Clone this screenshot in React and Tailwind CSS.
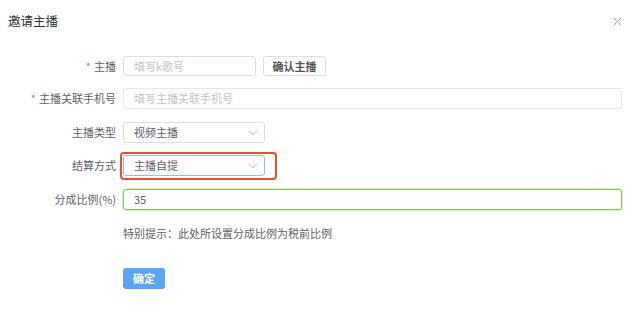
import React from "react";

const font = { fontFamily: '"Noto Sans CJK SC", "Noto Sans", sans-serif' };

const Label = ({ children, required }) => (
  <div className="w-[123px] shrink-0 pr-[7px] text-right text-[11px] text-[#606266]">
    {required && <span className="mr-[3px] text-[#f56c6c]">*</span>}
    {children}
  </div>
);

const Chevron = () => (
  <svg width="10" height="6" viewBox="0 0 10 6" className="text-[#c0c4cc]">
    <path d="M1 1l4 4 4-4" fill="none" stroke="currentColor" strokeWidth="1" />
  </svg>
);

const Select = ({ value, focused }) => (
  <div
    className={
      "flex h-[21px] w-[142px] items-center justify-between rounded-[3px] border bg-white pl-[10px] pr-[6px] text-[11px] text-[#606266] " +
      (focused ? "border-[#93bdf5]" : "border-[#dcdfe6]")
    }
  >
    <span>{value}</span>
    <Chevron />
  </div>
);

export default function App() {
  return (
    <div className="h-[321px] w-[634px] bg-white" style={font}>
      <div className="flex items-center justify-between pl-[8px] pr-[12px] pt-[12px]">
        <div className="text-[12.5px] leading-[18px] text-[#303133]">邀请主播</div>
        <svg width="9" height="9" viewBox="0 0 9 9" className="text-[#a0a4ab]">
          <path d="M1 1l7 7M8 1l-7 7" stroke="currentColor" strokeWidth="1" />
        </svg>
      </div>

      <div className="mt-[26px] flex flex-col">
        <div className="flex items-center">
          <Label required>主播</Label>
          <div className="flex h-[20px] w-[133px] items-center rounded-[3px] border border-[#dcdfe6] px-[10px] text-[11px] text-[#c0c4cc]">
            填写k歌号
          </div>
          <div className="ml-[7px] flex h-[20px] w-[63px] items-center justify-center rounded-[3px] border border-[#dcdfe6] text-[11px] font-semibold text-[#555]">
            确认主播
          </div>
        </div>

        <div className="mt-[12px] flex items-center">
          <Label required>主播关联手机号</Label>
          <div className="flex h-[21px] w-[499px] items-center rounded-[3px] border border-[#e4e7ed] px-[10px] text-[11px] text-[#c0c4cc]">
            填写主播关联手机号
          </div>
        </div>

        <div className="mt-[13px] flex items-center">
          <Label>主播类型</Label>
          <Select value="视频主播" />
        </div>

        <div className="mt-[12px] flex items-center">
          <Label>结算方式</Label>
          <div className="relative">
            <Select value="主播自提" focused />
            <div className="pointer-events-none absolute left-[-3px] top-[-3px] h-[28px] w-[157px] rounded-[4px] border-2 border-[#e8502c]" />
          </div>
        </div>

        <div className="mt-[13px] flex items-center">
          <Label>分成比例(%)</Label>
          <div className="flex h-[21px] w-[499px] items-center rounded-[3px] border border-[#8bc652] px-[10px] text-[11px] text-[#606266] shadow-[0_0_0_0.5px_#b5dc96]">
            35
          </div>
        </div>

        <div className="mt-[15px] pl-[123px] text-[11px] leading-[16px] text-[#606266]">
          特别提示：此处所设置分成比例为税前比例
        </div>

        <div className="mt-[27px] pl-[123px]">
          <div className="flex h-[21px] w-[42px] items-center justify-center rounded-[3px] bg-[#5ea4f6] text-[11px] font-semibold text-white">
            确定
          </div>
        </div>
      </div>
    </div>
  );
}
